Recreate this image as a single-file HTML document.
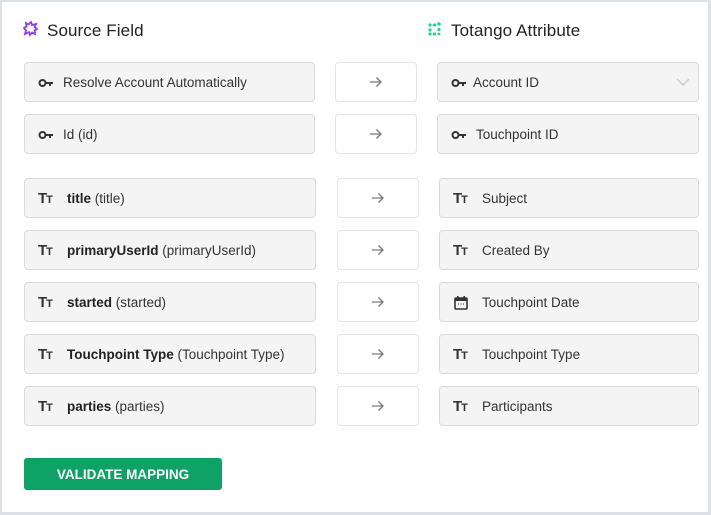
<!DOCTYPE html>
<html><head><meta charset="utf-8"><style>
*{box-sizing:border-box;margin:0;padding:0}
body{width:711px;height:515px;background:#dde1e6;font-family:"Liberation Sans",sans-serif;color:#2b2b2b;position:relative;overflow:hidden}
.card{position:absolute;left:2px;top:2px;width:706px;height:510px;background:#fff}
.h{position:absolute;top:21px;font-size:17px;font-weight:500;color:#222;letter-spacing:0.1px}
.box{position:absolute;height:40px;background:#f4f4f4;border:1px solid #d9d9d9;border-radius:4px;font-size:13.5px;display:flex;align-items:center;color:#333}
.arr{position:absolute;height:40px;width:82px;background:#fff;border:1px solid #e4e4e4;border-radius:4px;display:flex;align-items:center;justify-content:center}
.ic{position:absolute;left:13px;top:12px;width:16px;height:16px}
.tt{position:absolute;left:13px;top:11px;font-weight:bold;font-size:15px;color:#333;letter-spacing:-1px}
.tt small{font-size:11px}
.t{position:absolute;left:42px;white-space:nowrap}
b{font-weight:bold;color:#222}
.btn{position:absolute;left:24px;top:458px;width:198px;height:32px;background:#0fa267;border-radius:3px;color:#fff;font-weight:bold;font-size:13.5px;display:flex;align-items:center;justify-content:center}
</style></head><body>
<div class="card"></div>
<svg style="position:absolute;left:23px;top:21px" width="15" height="16" viewBox="0 0 15 16"><path d="M3 2 L5.5 3.5 L8 1 L9 4 L13 3 L11.5 6 L14 8 L11.5 9.5 L12 13 L9 11.5 L7 14 L6 11 L2 13 L3 9.5 L1 7 L3.5 5.5 Z" fill="none" stroke="#8b3ff0" stroke-width="1.8"/></svg>
<div class="h" style="left:47px">Source Field</div>
<svg style="position:absolute;left:427px;top:21px" width="15" height="16"><g fill="#22d48a"><circle cx="3" cy="4" r="1.6"/><circle cx="7.5" cy="4" r="1.6"/><circle cx="12" cy="3" r="1.8"/><circle cx="3" cy="9" r="1.6"/><circle cx="12" cy="8.5" r="1.6"/><circle cx="3" cy="13" r="1.6"/><circle cx="7.5" cy="13" r="1.6"/><circle cx="12" cy="13" r="1.4"/></g></svg>
<div class="h" style="left:451px">Totango Attribute</div>

<div class="box" style="left:24px;top:62px;width:291px"><svg class="ic" viewBox="0 0 16 16"><circle cx="4.5" cy="8" r="3" fill="none" stroke="#333" stroke-width="2"/><path d="M7 7h8v2h-2v2h-2V9H7z" fill="#333"/></svg><span class="t" style="left:38px">Resolve Account Automatically</span></div>
<div class="arr" style="left:335px;top:62px"><svg width="14" height="12"><path d="M1 6h11M7.5 1.5L12 6l-4.5 4.5" fill="none" stroke="#777" stroke-width="1.3"/></svg></div>
<div class="box" style="left:437px;top:62px;width:262px"><svg class="ic" viewBox="0 0 16 16"><circle cx="4.5" cy="8" r="3" fill="none" stroke="#333" stroke-width="2"/><path d="M7 7h8v2h-2v2h-2V9H7z" fill="#333"/></svg><span class="t" style="left:35px">Account ID</span><svg style="position:absolute;right:8px;top:15px" width="14" height="9"><path d="M1 1l6 6 6-6" fill="none" stroke="#ccc" stroke-width="1.5"/></svg></div>

<div class="box" style="left:24px;top:114px;width:291px"><svg class="ic" viewBox="0 0 16 16"><circle cx="4.5" cy="8" r="3" fill="none" stroke="#333" stroke-width="2"/><path d="M7 7h8v2h-2v2h-2V9H7z" fill="#333"/></svg><span class="t" style="left:38px">Id (id)</span></div>
<div class="arr" style="left:335px;top:114px"><svg width="14" height="12"><path d="M1 6h11M7.5 1.5L12 6l-4.5 4.5" fill="none" stroke="#777" stroke-width="1.3"/></svg></div>
<div class="box" style="left:437px;top:114px;width:262px"><svg class="ic" viewBox="0 0 16 16"><circle cx="4.5" cy="8" r="3" fill="none" stroke="#333" stroke-width="2"/><path d="M7 7h8v2h-2v2h-2V9H7z" fill="#333"/></svg><span class="t" style="left:38px">Touchpoint ID</span></div>

<div class="box" style="left:24px;top:178px;width:292px"><span class="tt">T<small>T</small></span><span class="t"><b>title</b> (title)</span></div>
<div class="arr" style="left:337px;top:178px"><svg width="14" height="12"><path d="M1 6h11M7.5 1.5L12 6l-4.5 4.5" fill="none" stroke="#777" stroke-width="1.3"/></svg></div>
<div class="box" style="left:439px;top:178px;width:260px"><span class="tt">T<small>T</small></span><span class="t">Subject</span></div>

<div class="box" style="left:24px;top:230px;width:292px"><span class="tt">T<small>T</small></span><span class="t"><b>primaryUserId</b> (primaryUserId)</span></div>
<div class="arr" style="left:337px;top:230px"><svg width="14" height="12"><path d="M1 6h11M7.5 1.5L12 6l-4.5 4.5" fill="none" stroke="#777" stroke-width="1.3"/></svg></div>
<div class="box" style="left:439px;top:230px;width:260px"><span class="tt">T<small>T</small></span><span class="t">Created By</span></div>

<div class="box" style="left:24px;top:282px;width:292px"><span class="tt">T<small>T</small></span><span class="t"><b>started</b> (started)</span></div>
<div class="arr" style="left:337px;top:282px"><svg width="14" height="12"><path d="M1 6h11M7.5 1.5L12 6l-4.5 4.5" fill="none" stroke="#777" stroke-width="1.3"/></svg></div>
<div class="box" style="left:439px;top:282px;width:260px"><svg class="ic" viewBox="0 0 16 16"><rect x="2" y="3" width="12" height="11" rx="1" fill="none" stroke="#333" stroke-width="1.6"/><rect x="2" y="3" width="12" height="3" fill="#333"/><rect x="4" y="1" width="1.6" height="3" fill="#333"/><rect x="10.4" y="1" width="1.6" height="3" fill="#333"/><path d="M5 9h1M7.5 9h1M10 9h1" stroke="#333"/></svg><span class="t">Touchpoint Date</span></div>

<div class="box" style="left:24px;top:334px;width:292px"><span class="tt">T<small>T</small></span><span class="t"><b>Touchpoint Type</b> (Touchpoint Type)</span></div>
<div class="arr" style="left:337px;top:334px"><svg width="14" height="12"><path d="M1 6h11M7.5 1.5L12 6l-4.5 4.5" fill="none" stroke="#777" stroke-width="1.3"/></svg></div>
<div class="box" style="left:439px;top:334px;width:260px"><span class="tt">T<small>T</small></span><span class="t">Touchpoint Type</span></div>

<div class="box" style="left:24px;top:386px;width:292px"><span class="tt">T<small>T</small></span><span class="t"><b>parties</b> (parties)</span></div>
<div class="arr" style="left:337px;top:386px"><svg width="14" height="12"><path d="M1 6h11M7.5 1.5L12 6l-4.5 4.5" fill="none" stroke="#777" stroke-width="1.3"/></svg></div>
<div class="box" style="left:439px;top:386px;width:260px"><span class="tt">T<small>T</small></span><span class="t">Participants</span></div>

<div class="btn">VALIDATE MAPPING</div>
</body></html>
